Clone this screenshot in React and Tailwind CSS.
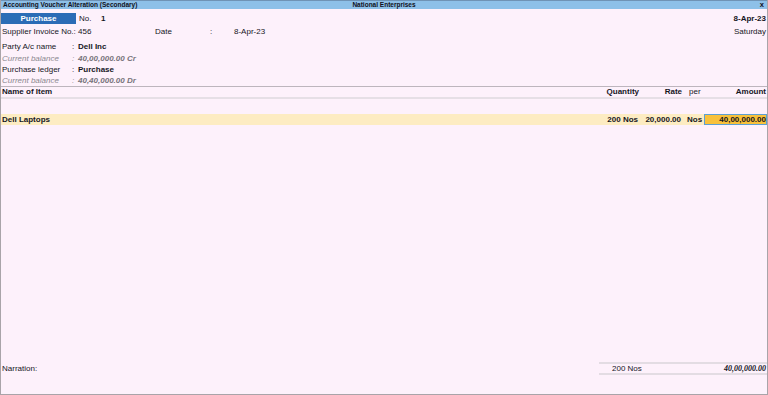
export default function App() {
  const font = { fontFamily: '"Liberation Sans", Arial, sans-serif' };
  return (
    <div
      className="w-[768px] h-[395px] bg-[#fdf1fb] flex flex-col border-x border-b border-[#a9a4a9] text-[8px] text-[#16161e] overflow-hidden"
      style={font}
    >
      {/* Title bar */}
      <div className="h-[9px] shrink-0 bg-[#8dc0e8] border-t border-[#6f93b5] grid grid-cols-[1fr_auto_1fr] items-center text-[6.5px] font-bold text-[#101020] leading-[8px]">
        <div className="pl-[2px] whitespace-nowrap">Accounting Voucher Alteration (Secondary)</div>
        <div className="whitespace-nowrap">National Enterprises</div>
        <div className="text-right pr-[3px] text-[7.5px] font-black">x</div>
      </div>

      {/* Row 1 */}
      <div className="mt-[4px] h-[11px] flex items-center">
        <div className="w-[75px] h-[11px] bg-[#2b6cb6] text-white font-bold text-center leading-[11px]">
          Purchase
        </div>
        <div className="ml-[3px] w-[22px]">No.</div>
        <div className="font-bold">1</div>
        <div className="ml-auto pr-[1px] font-bold">8-Apr-23</div>
      </div>

      {/* Row 2 */}
      <div className="mt-[2px] h-[11px] flex items-center">
        <div className="pl-[1px] w-[77px] whitespace-nowrap">Supplier Invoice No.:</div>
        <div className="w-[77px]">456</div>
        <div className="w-[55px]">Date</div>
        <div className="w-[24px]">:</div>
        <div>8-Apr-23</div>
        <div className="ml-auto pr-[1px]">Saturday</div>
      </div>

      {/* Row 3 */}
      <div className="mt-[4px] h-[11px] flex items-center">
        <div className="pl-[1px] w-[71px]">Party A/c name</div>
        <div className="w-[6px]">:</div>
        <div className="font-bold">Dell Inc</div>
      </div>
      {/* Row 4 */}
      <div className="mt-[1px] h-[11px] flex items-center italic text-[#8c8890]">
        <div className="pl-[1px] w-[71px]">Current balance</div>
        <div className="w-[6px]">:</div>
        <div className="font-bold text-[#77737a]">40,00,000.00 Cr</div>
      </div>
      {/* Row 5 */}
      <div className="h-[11px] flex items-center">
        <div className="pl-[1px] w-[71px]">Purchase ledger</div>
        <div className="w-[6px]">:</div>
        <div className="font-bold">Purchase</div>
      </div>
      {/* Row 6 */}
      <div className="h-[11px] flex items-center italic text-[#8c8890]">
        <div className="pl-[1px] w-[71px]">Current balance</div>
        <div className="w-[6px]">:</div>
        <div className="font-bold text-[#77737a]">40,40,000.00 Dr</div>
      </div>

      {/* Table header */}
      <div className="border-t border-[#bdb5bd] border-b-2 border-b-[#e6dfe6] h-[13px] flex items-center font-bold">
        <div className="flex-1 pl-[1px]">Name of Item</div>
        <div className="w-[60px] text-right pr-[1px]">Quantity</div>
        <div className="w-[43px] text-right pr-[1px]">Rate</div>
        <div className="w-[21px] pl-[6px] font-normal">per</div>
        <div className="w-[63px] text-right pr-[1px]">Amount</div>
      </div>

      {/* Item row */}
      <div className="mt-[15px] h-[11px] flex items-center bg-[#fdecc2] font-bold">
        <div className="flex-1 pl-[1px]">Dell Laptops</div>
        <div className="w-[60px] text-right pr-[2px]">200 Nos</div>
        <div className="w-[43px] text-right pr-[2px]">20,000.00</div>
        <div className="w-[21px] pl-[4px]">Nos</div>
        <div className="w-[63px] h-[11px] bg-[#f8c13b] border border-[#5d9fd2] text-right pr-[0px] leading-[9px]">
          40,00,000.00
        </div>
      </div>

      <div className="flex-1" />

      {/* Bottom */}
      <div className="flex items-center mb-[19px]">
        <div className="flex-1 pl-[1px] pt-[1px]">Narration:</div>
        <div className="w-[168px] h-[13px] border-y-2 border-[#e3dce3] flex items-center">
          <div className="flex-1 pl-[13px]">200 Nos</div>
          <div
            className="pr-[1px] font-bold italic"
            style={{ fontFamily: '"Liberation Serif", "Times New Roman", serif' }}
          >
            40,00,000.00
          </div>
        </div>
      </div>
    </div>
  );
}
